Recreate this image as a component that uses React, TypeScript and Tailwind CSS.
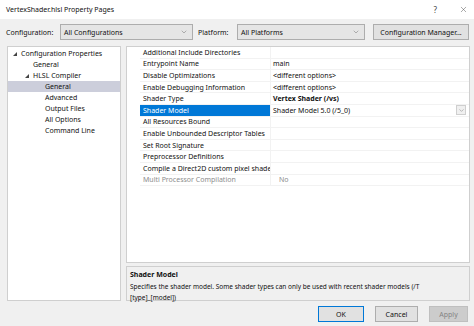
import { ChevronDown, X } from 'lucide-react'

const treeRows = [
  { label: 'Configuration Properties', indent: 0, arrow: true },
  { label: 'General', indent: 1 },
  { label: 'HLSL Compiler', indent: 1, arrow: true },
  { label: 'General', indent: 2, selected: true },
  { label: 'Advanced', indent: 2 },
  { label: 'Output Files', indent: 2 },
  { label: 'All Options', indent: 2 },
  { label: 'Command Line', indent: 2 },
]

const props: { name: string; value?: string; bold?: boolean; selected?: boolean; dim?: boolean }[] = [
  { name: 'Additional Include Directories' },
  { name: 'Entrypoint Name', value: 'main' },
  { name: 'Disable Optimizations', value: '<different options>' },
  { name: 'Enable Debugging Information', value: '<different options>' },
  { name: 'Shader Type', value: 'Vertex Shader (/vs)', bold: true },
  { name: 'Shader Model', value: 'Shader Model 5.0 (/5_0)', selected: true },
  { name: 'All Resources Bound' },
  { name: 'Enable Unbounded Descriptor Tables' },
  { name: 'Set Root Signature' },
  { name: 'Preprocessor Definitions' },
  { name: 'Compile a Direct2D custom pixel shader' },
  { name: 'Multi Processor Compilation', value: 'No', dim: true },
]

function Combo({ text, width }: { text: string; width: string }) {
  return (
    <div
      className={`${width} flex h-[16px] items-center justify-between border border-[#adadad] bg-[#e5e5e5] pl-[3px] pr-[4px]`}
    >
      <span>{text}</span>
      <ChevronDown className="h-[8px] w-[8px] text-[#707070]" strokeWidth={1.5} />
    </div>
  )
}

export default function App() {
  return (
    <div
      className="flex h-[326px] w-[474px] flex-col overflow-hidden whitespace-nowrap bg-[#f0f0f0] text-[7px] leading-none text-[#111]"
      style={{ fontFamily: '"Noto Sans", "Open Sans", sans-serif' }}
    >
      {/* title bar */}
      <div className="flex h-[19px] shrink-0 items-center justify-between bg-white pl-[6px] pr-[6px]">
        <span>VertexShader.hlsl Property Pages</span>
        <div className="flex items-center gap-[22px] text-[#444]">
          <span className="text-[8px]">?</span>
          <X className="h-[9px] w-[9px]" strokeWidth={1.2} />
        </div>
      </div>

      {/* configuration row */}
      <div className="mt-[5px] flex h-[16px] shrink-0 items-center pl-[6px]">
        <span className="w-[54px]">Configuration:</span>
        <Combo text="All Configurations" width="w-[133px]" />
        <span className="ml-[5px] w-[39px]">Platform:</span>
        <Combo text="All Platforms" width="w-[128px]" />
        <button className="ml-[8px] flex h-[16px] w-[96px] items-center justify-center border border-[#adadad] bg-[#e1e1e1]">
          Configuration Manager...
        </button>
      </div>

      {/* main */}
      <div className="mt-[6px] flex h-[255px] shrink-0 gap-[5px] pl-[7px]">
        <div className="w-[114px] border border-[#cfcfcf] bg-white pt-[1px]">
          {treeRows.map((r, i) => (
            <div
              key={i}
              className={`flex h-[11px] items-center ${r.selected ? 'bg-[#cccedb]' : ''}`}
              style={{ paddingLeft: 1 + r.indent * 12 }}
            >
              <span className="flex w-[12px] justify-center">
                {r.arrow && (
                  <svg width="4" height="4" viewBox="0 0 4 4">
                    <path d="M4 0 L4 4 L0 4 Z" fill="#444" />
                  </svg>
                )}
              </span>
              <span>{r.label}</span>
            </div>
          ))}
        </div>

        <div className="flex w-[344px] flex-col gap-[3px]">
          <div className="h-[217px] border border-[#cfcfcf] bg-white">
            {props.map((p, i) => (
              <div key={i} className="flex h-[11.6px] items-stretch">
                <div className="w-[13px] shrink-0" />
                <div
                  className={`flex w-[130px] shrink-0 items-center overflow-hidden border-b border-[#f2f2f2] pl-[3px] ${
                    p.selected ? 'bg-[#0078d7] text-white' : p.dim ? 'text-[#8d8d8d]' : ''
                  }`}
                >
                  {p.name}
                </div>
                <div className="flex flex-1 items-center justify-between border-b border-l border-[#f2f2f2] pl-[2px] pr-[3px]">
                  <span className={`${p.bold ? 'font-bold' : ''} ${p.dim ? 'pl-[6px] text-[#8d8d8d]' : ''}`}>
                    {p.value}
                  </span>
                  {p.selected && (
                    <span className="flex h-[10px] w-[10px] items-center justify-center border border-[#cfcfcf] bg-[#f0f0f0]">
                      <ChevronDown className="h-[7px] w-[7px] text-[#707070]" strokeWidth={1.5} />
                    </span>
                  )}
                </div>
              </div>
            ))}
          </div>

          <div className="h-[35px] border border-[#cfcfcf] bg-[#f0f0f0] px-[3px] pt-[2px]">
            <div className="font-bold leading-[12px]">Shader Model</div>
            <div className="text-[6.5px] leading-[11px]">
              Specifies the shader model. Some shader types can only be used with recent shader models (/T
              <br />
              [type]_[model])
            </div>
          </div>
        </div>
      </div>

      {/* buttons */}
      <div className="mt-[5px] flex h-[16px] shrink-0 justify-end gap-[11px] pr-[6px]">
        <button className="h-[16px] w-[46px] border border-[#0078d7] bg-[#e1e1e1]">OK</button>
        <button className="h-[16px] w-[43px] border border-[#adadad] bg-[#e1e1e1]">Cancel</button>
        <button className="h-[16px] w-[39px] border border-[#bfbfbf] bg-[#cccccc] text-[#838383]">Apply</button>
      </div>
    </div>
  )
}
